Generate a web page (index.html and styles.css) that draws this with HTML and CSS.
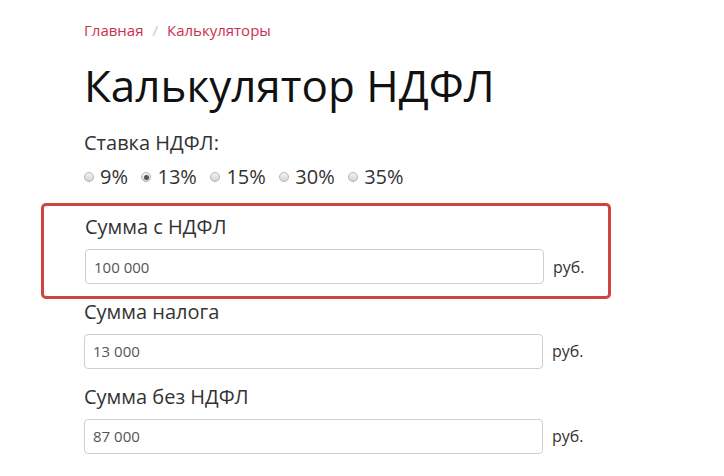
FILE: index.html
```html
<!DOCTYPE html>
<html lang="ru">
<head>
<meta charset="utf-8">
<title>Калькулятор НДФЛ</title>
<link rel="stylesheet" href="styles.css">
</head>
<body>
<div class="page">
  <nav class="breadcrumb">
    <a href="#">Главная</a><span class="sep">/</span><a href="#">Калькуляторы</a>
  </nav>
  <h1 class="title">Калькулятор НДФЛ</h1>
  <div class="rate-label">Ставка НДФЛ:</div>
  <div class="rates">
    <label class="rate"><input type="radio" name="rate"><span>9%</span></label>
    <label class="rate"><input type="radio" name="rate" checked><span>13%</span></label>
    <label class="rate"><input type="radio" name="rate"><span>15%</span></label>
    <label class="rate"><input type="radio" name="rate"><span>30%</span></label>
    <label class="rate"><input type="radio" name="rate"><span>35%</span></label>
  </div>
  <div class="highlight">
    <div class="group">
      <div class="group-label">Сумма с НДФЛ</div>
      <div class="row"><input class="field" type="text" value="100 000"><span class="unit">руб.</span></div>
    </div>
  </div>
  <div class="group">
    <div class="group-label">Сумма налога</div>
    <div class="row"><input class="field" type="text" value="13 000"><span class="unit">руб.</span></div>
  </div>
  <div class="group">
    <div class="group-label">Сумма без НДФЛ</div>
    <div class="row"><input class="field" type="text" value="87 000"><span class="unit">руб.</span></div>
  </div>
</div>
</body>
</html>
```
FILE: styles.css
```css
html, body {
  margin: 0;
  padding: 0;
  background: #fff;
}
body {
  font-family: "Open Sans", "Liberation Sans", sans-serif;
  color: #333;
  overflow: hidden;
}
.page {
  padding: 20px 0 0 84px;
}
.breadcrumb {
  font-size: 15px;
  line-height: 20px;
  display: flex;
  align-items: center;
}
.breadcrumb a {
  color: #c9304f;
  text-decoration: none;
}
.breadcrumb .sep {
  color: #c8c8c8;
  padding: 0 9px;
}
.title {
  margin: 20px 0 0;
  font-size: 44px;
  line-height: 50px;
  font-weight: 400;
  color: #111;
}
.rate-label {
  margin-top: 20px;
  font-size: 20px;
  line-height: 25px;
}
.rates {
  margin-top: 9px;
  display: flex;
  gap: 13.5px;
  font-size: 20px;
  line-height: 25px;
}
.rate {
  display: flex;
  align-items: center;
  gap: 6px;
}
.rate input {
  appearance: none;
  -webkit-appearance: none;
  margin: 1px 0 0 0;
  width: 10px;
  height: 10px;
  border-radius: 50%;
  border: 1px solid #b4b4b4;
  background: linear-gradient(#f4f4f4, #d4d4d4);
  box-sizing: border-box;
  position: relative;
}
.rate input:checked::after {
  content: "";
  position: absolute;
  left: 1.5px;
  top: 1.5px;
  width: 5px;
  height: 5px;
  border-radius: 50%;
  background: #555;
}
.highlight {
  margin: 14px 0 0 -43px;
  width: 570px;
  box-sizing: border-box;
  border: 3px solid #d0443f;
  border-radius: 5px;
  padding: 8px 0 11.5px 41px;
}
.highlight .group {
  margin-bottom: 0;
}
.group {
  margin-bottom: 15px;
}
.group-label {
  font-size: 20px;
  line-height: 25px;
  margin-bottom: 10px;
}
.row {
  display: flex;
  align-items: center;
  gap: 9px;
}
.field {
  width: 459px;
  height: 35px;
  box-sizing: border-box;
  border: 1px solid #cfcfcf;
  border-radius: 4px;
  padding: 0 8px;
  font-family: "Open Sans", "Liberation Sans", sans-serif;
  font-size: 15px;
  color: #555;
  background: #fff;
  outline: none;
}
.unit {
  font-size: 16px;
  color: #333;
}
```
